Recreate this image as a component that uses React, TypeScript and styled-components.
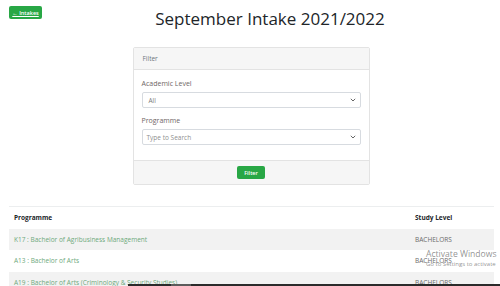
import { createGlobalStyle, styled } from "styled-components"

const GlobalStyle = createGlobalStyle`
    html, body {
        margin: 0;
        padding: 0;
        background: #ffffff;
        font-family: "Open Sans", "Noto Sans", sans-serif;
        color: #212529;
        overflow: hidden;
    }
    * {
        box-sizing: border-box;
    }
`

const Page = styled.div`
    width: 500px;
    height: 286px;
    position: relative;
    overflow: hidden;
`

const Header = styled.div`
    display: grid;
    grid-template-columns: 34px 1fr;
    align-items: start;
    padding: 6px 9px 0 9px;
`

const BackButton = styled.button`
    background: #28a745;
    color: #ffffff;
    border: 0;
    border-radius: 2px;
    font-family: inherit;
    font-size: 5.5px;
    font-weight: 600;
    height: 13px;
    width: 33px;
    padding: 0;
    cursor: pointer;
    text-decoration: underline;
    white-space: nowrap;
`

const Title = styled.h1`
    margin: 0;
    font-size: 17px;
    font-weight: 400;
    line-height: 24px;
    text-align: center;
    padding-top: 1px;
    padding-left: 6px;
    color: #212529;
`

const Card = styled.div`
    width: 237px;
    margin: 16px auto 0 auto;
    border: 1px solid #e3e3e3;
    border-radius: 2px;
    background: #ffffff;
    position: relative;
    left: 1px;
`

const CardHeader = styled.div`
    background: #f6f6f6;
    border-bottom: 1px solid #e3e3e3;
    height: 22px;
    padding: 0 9px;
    display: flex;
    align-items: center;
    font-size: 6.5px;
    color: #6c757d;
`

const CardBody = styled.div`
    padding: 9px 8px 15px 8px;
`

const Field = styled.div`
    margin-bottom: 8px;

    &:last-child {
        margin-bottom: 0;
    }
`

const Label = styled.div`
    font-size: 7px;
    color: #6f6666;
    margin-bottom: 4px;
`

const Select = styled.div<{ $placeholder?: boolean }>`
    height: 16px;
    border: 1px solid #d7dbe0;
    border-radius: 2px;
    display: flex;
    align-items: center;
    justify-content: space-between;
    padding: 0 4px 0 ${(p) => (p.$placeholder ? "4px" : "6px")};
    font-size: 6.5px;
    color: ${(p) => (p.$placeholder ? "#8f8f8f" : "#7a7a7a")};
`

const CardFooter = styled.div`
    background: #f6f6f6;
    border-top: 1px solid #e3e3e3;
    height: 24px;
    display: flex;
    align-items: center;
    justify-content: center;
`

const FilterButton = styled.button`
    background: #28a745;
    color: #ffffff;
    border: 0;
    border-radius: 2px;
    font-family: inherit;
    font-size: 5.5px;
    font-weight: 600;
    width: 28px;
    height: 13px;
    padding: 0;
`

const Table = styled.table`
    width: 485px;
    margin: 21px 0 0 9px;
    border-collapse: collapse;
    font-size: 6.5px;
`

const Th = styled.th<{ $w?: number }>`
    text-align: left;
    font-weight: 700;
    color: #212529;
    height: 22px;
    padding: 0 5px;
    border-top: 1px solid #eceeef;
    width: ${(p) => (p.$w ? `${p.$w}px` : "auto")};
`

const Row = styled.tr<{ $striped: boolean }>`
    background: ${(p) => (p.$striped ? "#f2f2f2" : "#ffffff")};
`

const Td = styled.td`
    height: 21.5px;
    padding: 0 5px;
    color: #6b6b6b;
    white-space: nowrap;
`

const ProgLink = styled.span`
    color: #6ea97c;
`

const Watermark = styled.div`
    position: absolute;
    left: 426px;
    top: 249px;
    color: rgba(110, 110, 110, 0.75);
    font-size: 8.6px;
    line-height: 11px;
    white-space: nowrap;

    small {
        display: block;
        font-size: 6px;
        line-height: 8px;
        margin-left: 0;
    }
`

const Taskbar = styled.div`
    position: absolute;
    left: 128px;
    right: 0;
    bottom: 0;
    height: 2px;
    background: #2b2b2b;

    &::after {
        content: "";
        position: absolute;
        left: 43px;
        width: 20px;
        top: 0;
        bottom: 0;
        background: #5b5b5b;
    }
`

function Chevron() {
    return (
        <svg width="6" height="4" viewBox="0 0 6 4">
            <path d="M0.8 0.8 L3 3 L5.2 0.8" fill="none" stroke="#666" strokeWidth="1" />
        </svg>
    )
}

const rows = [
    { prog: "K17 : Bachelor of Agribusiness Management", level: "BACHELORS" },
    { prog: "A13 : Bachelor of Arts", level: "BACHELORS" },
    { prog: "A19 : Bachelor of Arts (Criminology & Security Studies)", level: "BACHELORS" },
]

function App() {
    return (
        <Page>
            <GlobalStyle />
            <Header>
                <BackButton>← Intakes</BackButton>
                <Title>September Intake 2021/2022</Title>
            </Header>
            <Card>
                <CardHeader>Filter</CardHeader>
                <CardBody>
                    <Field>
                        <Label>Academic Level</Label>
                        <Select>
                            All
                            <Chevron />
                        </Select>
                    </Field>
                    <Field>
                        <Label>Programme</Label>
                        <Select $placeholder>
                            Type to Search
                            <Chevron />
                        </Select>
                    </Field>
                </CardBody>
                <CardFooter>
                    <FilterButton>Filter</FilterButton>
                </CardFooter>
            </Card>
            <Table>
                <thead>
                    <tr>
                        <Th>Programme</Th>
                        <Th $w={84}>Study Level</Th>
                    </tr>
                </thead>
                <tbody>
                    {rows.map((r, i) => (
                        <Row key={r.prog} $striped={i % 2 === 0}>
                            <Td>
                                <ProgLink>{r.prog}</ProgLink>
                            </Td>
                            <Td>{r.level}</Td>
                        </Row>
                    ))}
                </tbody>
            </Table>
            <Watermark>
                Activate Windows
                <small>Go to Settings to activate</small>
            </Watermark>
            <Taskbar />
        </Page>
    )
}

export default App
